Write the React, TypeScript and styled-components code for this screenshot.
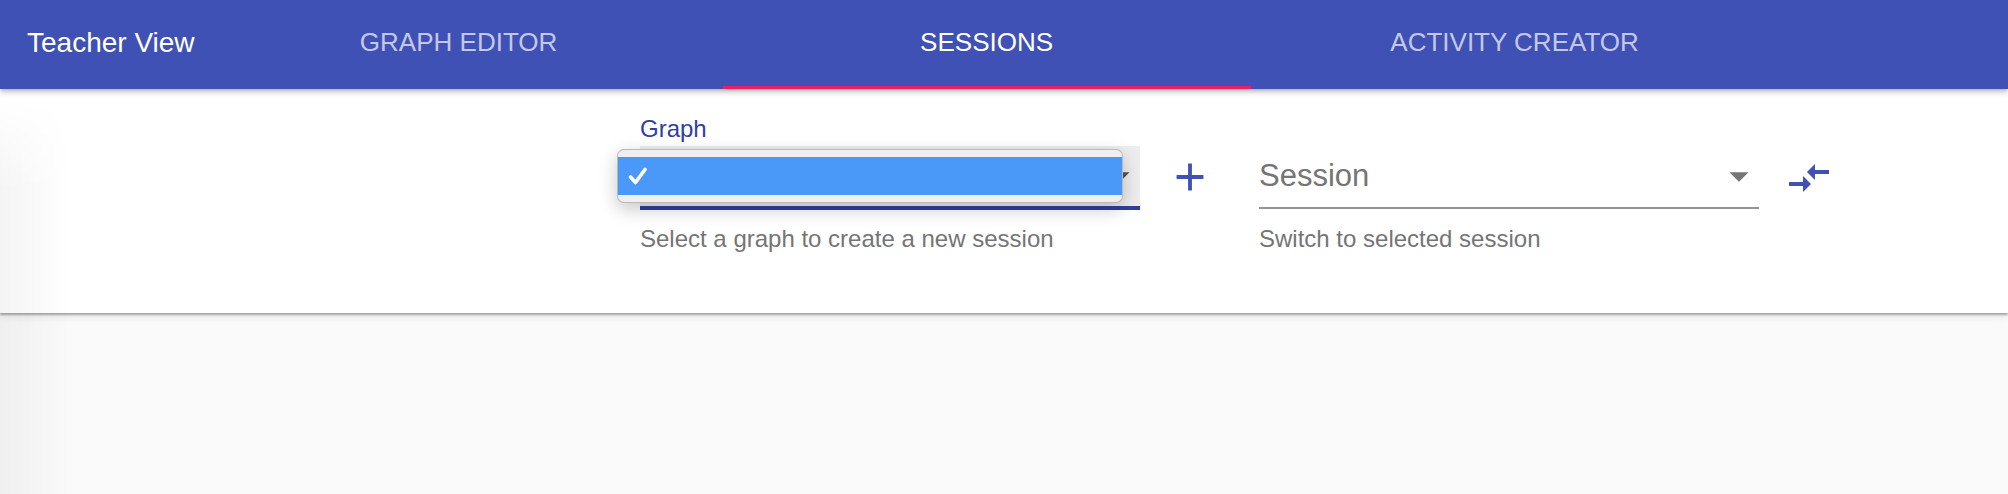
import { useState } from 'react'
import styled, { createGlobalStyle } from 'styled-components';

const tabs = ['Graph Editor', 'Sessions', 'Activity Creator'];

const GlobalStyle = createGlobalStyle`
  body {
    margin: 0;
    background: #fafafa;
    font-family: "Liberation Sans", Helvetica, Arial, sans-serif;
  }
`;

const AddIcon = () => (
  <svg width="46" height="46" viewBox="0 0 24 24" fill="currentColor">
    <path d="M19 13h-6v6h-2v-6H5v-2h6V5h2v6h6v2z" />
  </svg>
);

const SwapIcon = () => (
  <svg width="48" height="48" viewBox="0 0 24 24" fill="currentColor">
    <path d="M9.01 14H2v2h7.01v3L13 15l-3.99-4v3zm5.98-1v-3H22V8h-7.01V5L11 9l3.99 4z" />
  </svg>
);

const DropIcon = () => (
  <svg width="46" height="46" viewBox="0 0 24 24" fill="currentColor">
    <path d="M7 10l5 5 5-5z" />
  </svg>
);

const App = () => {
  const [tab, setTab] = useState(1);
  return (
    <Page>
      <GlobalStyle />
      <AppBar>
        <Title>Teacher View</Title>
        <TabList>
          {tabs.map((t, i) => (
            <Tab key={t} $active={i === tab} onClick={() => setTab(i)}>
              {t}
            </Tab>
          ))}
        </TabList>
      </AppBar>
      <Panel>
        <Row>
          <Field>
            <FieldLabel>Graph</FieldLabel>
            <InputBox $focused>
              <Arrow $dark>
                <DropIcon />
              </Arrow>
            </InputBox>
            <Underline $focused />
            <Helper>Select a graph to create a new session</Helper>
            <NativeMenu>
              <MenuOption>
                <svg width="20" height="18" viewBox="0 0 20 18">
                  <path d="M2.5 10 L7.5 15.5 L17 2.5" fill="none" stroke="#fff" strokeWidth="3.6" strokeLinecap="round" strokeLinejoin="round" />
                </svg>
              </MenuOption>
            </NativeMenu>
          </Field>
          <IconButton $left={27} $right={46}>
            <AddIcon />
          </IconButton>
          <Field>
            <FieldLabel />
            <InputBox>
              <Placeholder>Session</Placeholder>
              <Arrow>
                <DropIcon />
              </Arrow>
            </InputBox>
            <Underline />
            <Helper>Switch to selected session</Helper>
          </Field>
          <IconButton $left={26} $right={0}>
            <SwapIcon />
          </IconButton>
        </Row>
      </Panel>
      <EdgeShade />
    </Page>
  )
}

const Page = styled.div`
  min-height: 100vh;
`;

const AppBar = styled.header`
  position: relative;
  z-index: 2;
  display: flex;
  height: 89px;
  padding-left: 27px;
  background: #3f51b5;
  box-shadow: 0 2px 4px -1px rgba(0, 0, 0, 0.25), 0 4px 6px rgba(0, 0, 0, 0.14);
`;

const Title = styled.h1`
  display: flex;
  align-items: center;
  margin: 0;
  padding-bottom: 3px;
  font-size: 28px;
  font-weight: 400;
  color: #fff;
  white-space: nowrap;
`;

const TabList = styled.nav`
  display: flex;
`;

const Tab = styled.button<{ $active?: boolean }>`
  flex: 0 0 528px;
  height: 100%;
  padding: 0 0 1px;
  border: none;
  border-bottom: 3px solid ${(p) => (p.$active ? '#e91e63' : 'transparent')};
  background: transparent;
  font-family: inherit;
  font-size: 26px;
  text-transform: uppercase;
  color: ${(p) => (p.$active ? '#fff' : 'rgba(255, 255, 255, 0.7)')};
  cursor: pointer;
`;

const Panel = styled.section`
  position: relative;
  z-index: 1;
  height: 224px;
  box-sizing: border-box;
  padding: 28px 0 0 640px;
  background: #fff;
  box-shadow: 0 2px 2px rgba(0, 0, 0, 0.3), 0 4px 8px rgba(0, 0, 0, 0.08);
`;

const Row = styled.div`
  display: flex;
  align-items: flex-start;
`;

const Field = styled.div`
  position: relative;
  display: flex;
  flex-direction: column;
  width: 500px;
`;

const FieldLabel = styled.label`
  height: 24px;
  margin-bottom: 5px;
  font-size: 24px;
  line-height: 24px;
  color: #303f9f;
`;

const InputBox = styled.div<{ $focused?: boolean }>`
  display: flex;
  align-items: center;
  height: 60px;
  background: ${(p) => (p.$focused ? '#ededed' : 'transparent')};
`;

const Placeholder = styled.span`
  flex: 1;
  font-size: 31px;
  color: #757575;
`;

const Arrow = styled.span<{ $dark?: boolean }>`
  display: flex;
  margin-left: auto;
  margin-right: -3px;
  color: ${(p) => (p.$dark ? '#555' : '#757575')};
`;

const Underline = styled.div<{ $focused?: boolean }>`
  height: ${(p) => (p.$focused ? '4px' : '2px')};
  margin: ${(p) => (p.$focused ? '0' : '1px 0')};
  background: ${(p) => (p.$focused ? '#303f9f' : '#949494')};
`;

const Helper = styled.p`
  margin: 17px 0 0;
  font-size: 24px;
  line-height: 24px;
  color: #757575;
  white-space: nowrap;
`;

const NativeMenu = styled.div`
  position: absolute;
  left: -23px;
  top: 32px;
  width: 504px;
  padding: 7px 0;
  border: 1px solid rgba(0, 0, 0, 0.22);
  border-radius: 7px;
  background: #efefef;
  box-shadow: 0 6px 18px rgba(0, 0, 0, 0.22);
`;

const MenuOption = styled.div`
  display: flex;
  align-items: center;
  height: 38px;
  padding-left: 10px;
  background: #4a99f9;
`;

const IconButton = styled.button<{ $left: number; $right: number }>`
  display: flex;
  margin: 37px ${(p) => p.$right}px 0 ${(p) => p.$left}px;
  padding: 0;
  border: none;
  background: transparent;
  color: #3f51b5;
  cursor: pointer;
`;

const EdgeShade = styled.div`
  position: fixed;
  left: 0;
  top: 100px;
  bottom: 0;
  width: 70px;
  z-index: 3;
  pointer-events: none;
  background: linear-gradient(to right, rgba(0, 0, 0, 0.045), rgba(0, 0, 0, 0));
  -webkit-mask-image: linear-gradient(to bottom, transparent 0, #000 90px);
  mask-image: linear-gradient(to bottom, transparent 0, #000 90px);
`;

export default App
